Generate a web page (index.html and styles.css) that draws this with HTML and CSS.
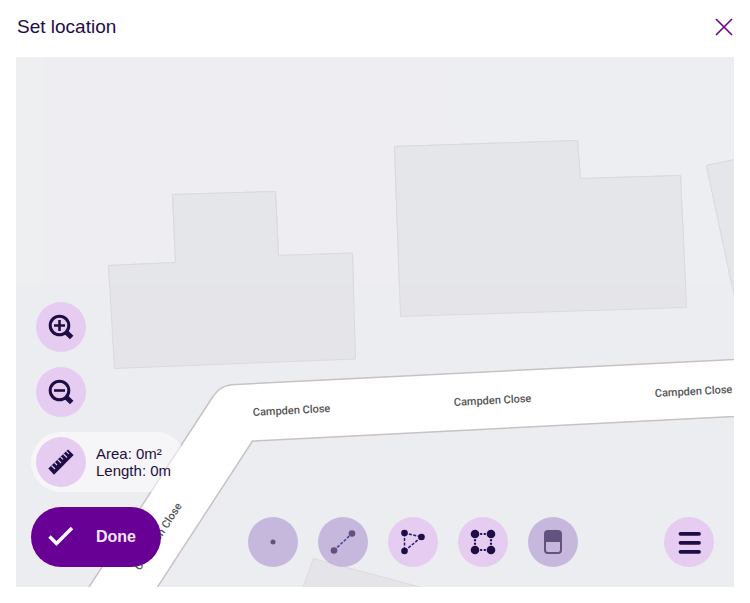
FILE: index.html
```html
<!DOCTYPE html>
<html lang="en">
<head>
<meta charset="utf-8">
<meta name="viewport" content="width=device-width, initial-scale=1">
<title>Set location</title>
<link rel="stylesheet" href="styles.css">
</head>
<body>
<header class="header">
  <h1 class="title">Set location</h1>
  <button class="close" type="button" aria-label="Close">
    <svg width="18" height="18" viewBox="0 0 18 18"><path d="M1 1L17 17M17 1L1 17"/></svg>
  </button>
</header>

<main class="map">
  <svg class="map-canvas" aria-hidden="true">
    <defs>
      <clipPath id="upper"><rect width="100%" height="227"/></clipPath>
    </defs>
    <rect class="tile-left" width="28" height="227"/>
    <rect class="tile-mid" x="28" width="412" height="227"/>
    <rect class="tile-right" x="440" width="100%" height="227"/>
    <g class="plots">
      <path d="M156.5 137.5L259.5 134.5L262.5 198.5L336.5 196L339.5 302L98.5 311.5L92.5 208.5L159.5 205.5Z"/>
      <path d="M378.5 89.5L561.5 83.5L564.5 121.5L664.5 118.5L670.5 250.5L384.5 259.5Z"/>
      <path d="M690.5 108.5L760 94L760 430L718 238Z"/>
      <path d="M297.5 501.5L285 536L430 537Z"/>
    </g>
    <g class="plots plots-upper" clip-path="url(#upper)">
      <path d="M156.5 137.5L259.5 134.5L262.5 198.5L336.5 196L339.5 302L98.5 311.5L92.5 208.5L159.5 205.5Z"/>
      <path d="M378.5 89.5L561.5 83.5L564.5 121.5L664.5 118.5L670.5 250.5L384.5 259.5Z"/>
      <path d="M690.5 108.5L760 94L760 430L718 238Z"/>
    </g>
    <path class="road" d="M66.5 540L196 341C202 332 207 328 220 327.5L1716 252.5V309L236.5 384L135 540Z"/>
    <g class="road-names">
      <text transform="translate(237 359) rotate(-3)">Campden Close</text>
      <text transform="translate(438 349) rotate(-3)">Campden Close</text>
      <text transform="translate(639 340) rotate(-3)">Campden Close</text>
      <text transform="translate(124 514) rotate(-57)">Campden Close</text>
    </g>
  </svg>

  <div class="controls">
    <div class="side">
      <button class="round" type="button" aria-label="Zoom in">
        <svg viewBox="0 0 50 50"><circle class="ring" cx="23.5" cy="23.5" r="9.3"/><path class="thin" d="M18 23.5H29M23.5 18V29"/><path class="handle" d="M30 30L35.7 35.5"/></svg>
      </button>
      <button class="round" type="button" aria-label="Zoom out">
        <svg viewBox="0 0 50 50"><circle class="ring" cx="23.5" cy="23.5" r="9.3"/><path class="thin" d="M18 23.5H29"/><path class="handle" d="M30 30L35.7 35.5"/></svg>
      </button>
    </div>
    <div class="measure">
      <button class="round" type="button" aria-label="Measure">
        <svg viewBox="0 0 50 50"><path class="solid" d="M12.3 31.5L32 12.5L37.7 18L18 37.7Z"/><path class="ticks" d="M15.5 28.5L19 32M18.5 25.5L21 28M21.5 22.5L25 26M24.5 19.8L27 22.3M27.5 17L31 20.5M30.3 14.3L32.8 16.8"/></svg>
      </button>
      <p class="readout">Area: 0m²<br>Length: 0m</p>
    </div>
    <div class="bar">
      <button class="done" type="button">
        <svg viewBox="0 0 26 24"><path d="M1.5 11.5L8.5 18.5L24 3"/></svg>
        <span>Done</span>
      </button>
      <div class="tools">
        <button class="round" type="button" aria-label="Draw point" disabled>
          <svg viewBox="0 0 50 50"><circle class="solid" cx="25" cy="25" r="2.5"/></svg>
        </button>
        <button class="round" type="button" aria-label="Draw line" disabled>
          <svg viewBox="0 0 50 50"><path class="dash" d="M16 33.5L34 16.5"/><circle class="solid" cx="16" cy="33.5" r="3.3"/><circle class="solid" cx="34" cy="16.5" r="3.3"/></svg>
        </button>
        <button class="round" type="button" aria-label="Draw polygon">
          <svg viewBox="0 0 50 50"><path class="dash" d="M16.5 16L33.5 20L16.5 34Z"/><circle class="solid" cx="16.5" cy="16" r="3.3"/><circle class="solid" cx="33.5" cy="20" r="3.3"/><circle class="solid" cx="16.5" cy="34" r="3.3"/></svg>
        </button>
        <button class="round" type="button" aria-label="Edit shape">
          <svg viewBox="0 0 50 50"><path class="dots" d="M22.2 17H28M22.2 33H28M17 22.2V28M33 22.2V28"/><circle class="solid" cx="17" cy="17" r="4.3"/><circle class="solid" cx="33" cy="17" r="4.3"/><circle class="solid" cx="17" cy="33" r="4.3"/><circle class="solid" cx="33" cy="33" r="4.3"/></svg>
        </button>
        <button class="round" type="button" aria-label="Erase" disabled>
          <svg viewBox="0 0 50 50"><path class="solid" d="M20 13H30Q34 13 34 17V33Q34 37 30 37H20Q16 37 16 33V17Q16 13 20 13ZM18 25V33Q18 35 20 35H30Q32 35 32 33V25Z" fill-rule="evenodd"/></svg>
        </button>
      </div>
      <button class="round" type="button" aria-label="Menu">
        <svg viewBox="0 0 50 50"><path class="lines" d="M16.5 16.8H35M16.5 25.8H35M16.5 34.8H35"/></svg>
      </button>
    </div>
  </div>
</main>
</body>
</html>
```
FILE: styles.css
```css
* {
  box-sizing: border-box;
}

body {
  margin: 0;
  min-height: 100vh;
  display: flex;
  flex-direction: column;
  background: #fff;
  color: #1f0d45;
  font-family: "Liberation Sans", Arial, sans-serif;
}

button {
  margin: 0;
  padding: 0;
  border: 0;
  font: inherit;
  cursor: pointer;
}

svg {
  display: block;
}

.header {
  display: flex;
  align-items: center;
  justify-content: space-between;
  padding: 15px 17px 18px;
}

.title {
  margin: 0;
  font-size: 19px;
  line-height: 24px;
  font-weight: 400;
}

.close {
  background: none;
}

.close path {
  stroke: #690096;
  stroke-width: 1.6;
}

.map {
  position: relative;
  flex: 1;
  display: flex;
  margin: 0 16px 16px;
  overflow: hidden;
  background: #ecedf1;
}

.map-canvas {
  position: absolute;
  width: 100%;
  height: 100%;
}

.tile-left { fill: #edeff0; }
.tile-mid { fill: #eeedf1; }
.tile-right { fill: #edeef2; }

.plots {
  fill: #e5e4e9;
  stroke: #dbdbdb;
}

.plots-upper {
  fill: #e5e6ea;
}

.road {
  fill: #fff;
  stroke: #c8c2c2;
  stroke-width: 1.5;
}

.road-names {
  fill: #555;
  font-family: Roboto, sans-serif;
  font-size: 11px;
  font-weight: 500;
}

.controls {
  position: relative;
  flex: 1;
  display: flex;
  flex-direction: column;
  justify-content: flex-end;
  align-items: flex-start;
  gap: 15px;
  padding: 20px 20px 20px 15px;
}

.side {
  display: flex;
  flex-direction: column;
  gap: 15px;
  padding-left: 5px;
}

.round {
  width: 50px;
  height: 50px;
  border-radius: 50%;
  background: #e6ccf0;
  color: #1f0d45;
}

.round:disabled {
  background: #c6b8dc;
  color: #62527e;
}

.solid {
  fill: currentColor;
}

.ring,
.thin,
.handle,
.dash,
.dots,
.lines {
  fill: none;
  stroke: currentColor;
}

.ring { stroke-width: 3; }
.thin { stroke-width: 2.6; }
.handle { stroke-width: 5; }

.ticks {
  stroke: #e6ccf0;
  stroke-width: 1.1;
}

.dash {
  stroke: #1f2470;
  stroke-width: 1.5;
  stroke-dasharray: 3 1.5;
}

.round:disabled .dash {
  stroke: #414397;
}

.dots {
  stroke-width: 2.2;
  stroke-dasharray: 2 1.6;
}

.lines {
  stroke-width: 3.8;
  stroke-linecap: round;
}

.measure {
  display: flex;
  align-items: center;
  gap: 10px;
  padding: 5px 15px 5px 5px;
  border-radius: 30px;
  background: rgba(255, 255, 255, 0.5);
}

.readout {
  margin: 0;
  font-size: 15px;
  line-height: 17px;
}

.bar {
  align-self: stretch;
  display: flex;
  align-items: flex-end;
  justify-content: space-between;
}

.done {
  display: flex;
  align-items: center;
  gap: 22px;
  height: 60px;
  padding: 0 25px 0 17px;
  border-radius: 30px;
  background: #690096;
  color: #f5e6fa;
  font-size: 16px;
  font-weight: 700;
}

.done svg {
  width: 26px;
}

.done path {
  fill: none;
  stroke: #fff;
  stroke-width: 3.4;
}

.tools {
  display: flex;
  gap: 20px;
}
```
